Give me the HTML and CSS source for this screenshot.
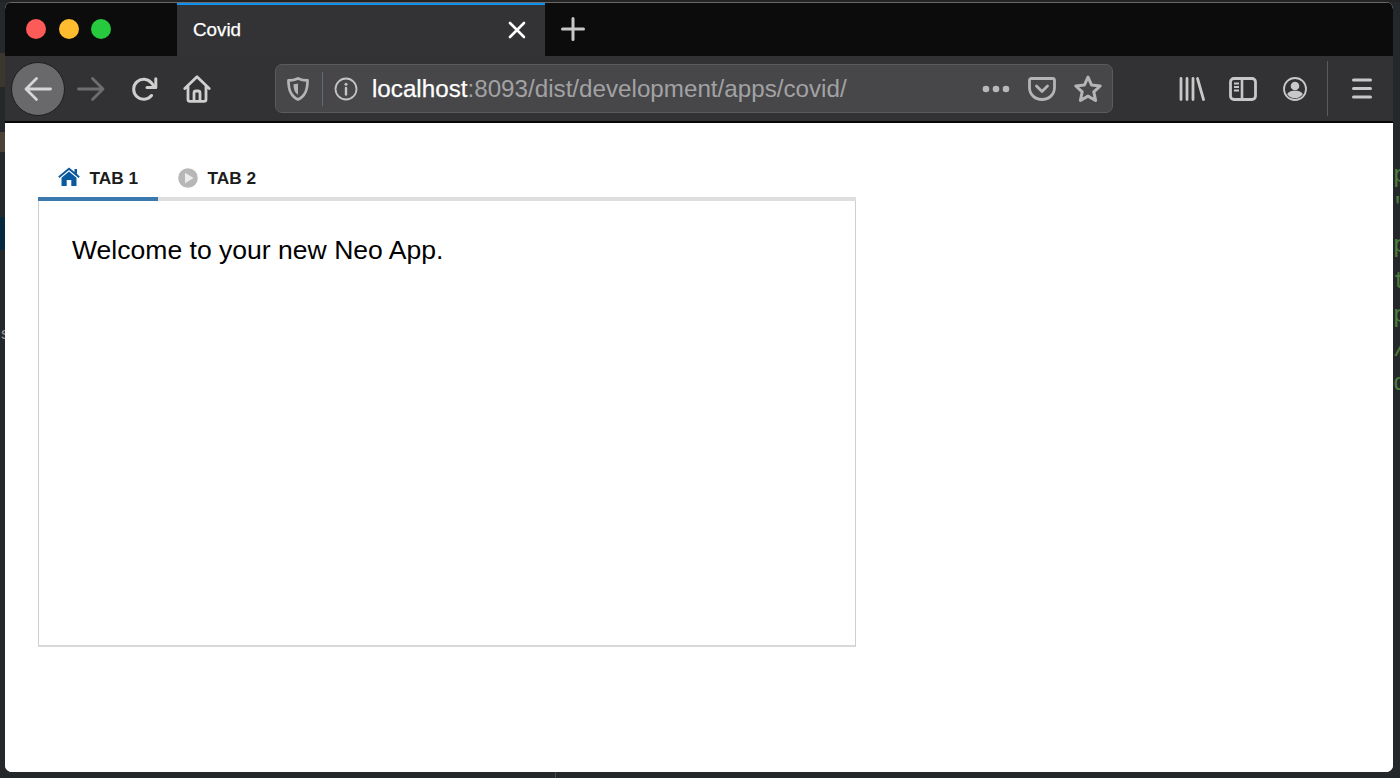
FILE: index.html
```html
<!DOCTYPE html>
<html lang="en">
<head>
<meta charset="utf-8">
<title>Covid</title>
<link rel="stylesheet" href="styles.css">
</head>
<body>
<div class="desk" aria-hidden="true">
  <span class="band band-brown0"></span>
  <span class="band band-brown"></span>
  <span class="band band-blue"></span>
  <span class="band band-top"></span>
  <span class="band band-seam"></span>
  <span class="stray stray-s">s</span>
  <span class="code c1">p</span>
  <span class="code c2">"</span>
  <span class="code c3">p</span>
  <span class="code c4">t</span>
  <span class="code c5">p</span>
  <span class="code c6">/</span>
  <span class="code c7">d</span>
</div>
<main class="window">
  <div class="tabbar">
    <div class="lights">
      <span class="light red"></span>
      <span class="light yellow"></span>
      <span class="light green"></span>
    </div>
    <div class="tab">
      <span class="tab-title">Covid</span>
      <svg class="close" width="18" height="18" viewBox="0 0 18 18"><path d="M2 2L16 16M16 2L2 16" stroke="#fff" stroke-width="2.600" stroke-linecap="round"/></svg>
    </div>
    <svg class="plus" width="24" height="24" viewBox="0 0 24 24"><path d="M12 1.500V22.500M1.500 12H22.500" stroke="#c8c8c8" stroke-width="3" stroke-linecap="round"/></svg>
  </div>
  <div class="toolbar">
    <div class="back">
      <svg width="28" height="26" viewBox="0 0 28 26"><path d="M26.500 13H2.500M12.500 2.500L2 13L12.500 23.500" fill="none" stroke="#d6d6d6" stroke-width="2.800" stroke-linecap="round" stroke-linejoin="round"/></svg>
    </div>
    <svg class="fwd" width="28" height="26" viewBox="0 0 28 26"><path d="M1.500 13H25.500M15.500 2.500L26 13L15.500 23.500" fill="none" stroke="#6e6e70" stroke-width="2.800" stroke-linecap="round" stroke-linejoin="round"/></svg>
    <svg class="reload" width="26" height="24" viewBox="0 0 26 24"><path d="M19.500 18.500A10 10 0 1 1 19.500 6L22 9" fill="none" stroke="#cfcfcf" stroke-width="3" stroke-linecap="round"/><path d="M23.800 1.800V10.500H15" fill="none" stroke="#cfcfcf" stroke-width="3" stroke-linecap="round" stroke-linejoin="round"/></svg>
    <svg class="home" width="28" height="28" viewBox="0 0 28 28"><path d="M1.800 13.500L14 1.800L26.200 13.500M5 11V24.500Q5 26.300 7 26.300H21Q23 26.300 23 24.500V11" fill="none" stroke="#cfcfcf" stroke-width="2.800" stroke-linecap="round" stroke-linejoin="round"/><path d="M11 26V18Q11 16 13 16H15Q17 16 17 18V26" fill="none" stroke="#cfcfcf" stroke-width="2.800"/></svg>
    <div class="urlbar">
      <svg class="shield" width="22" height="24" viewBox="0 0 22 24"><path d="M11 1.500C14 3 17 3.500 20.500 3.500C20.500 12 19 19 11 22.500C3 19 1.500 12 1.500 3.500C5 3.500 8 3 11 1.500Z" fill="none" stroke="#b4b4b4" stroke-width="2.800" stroke-linejoin="round"/><path d="M11 6.500C9.500 7 8 7.300 6.500 7.300C6.500 12 7.500 15.500 11 17.800Z" fill="#b4b4b4"/></svg>
      <span class="url-div"></span>
      <svg class="info" width="24" height="24" viewBox="0 0 24 24"><circle cx="12" cy="12" r="10.500" fill="none" stroke="#c4c4c4" stroke-width="1.800"/><circle cx="12" cy="7.200" r="1.500" fill="#c4c4c4"/><path d="M12 11V17.500" stroke="#c4c4c4" stroke-width="2.400" stroke-linecap="round"/></svg>
      <span class="url"><span class="host">localhost</span><span class="path">:8093/dist/development/apps/covid/</span></span>
      <svg class="dots" width="28" height="8" viewBox="0 0 28 8"><circle cx="4" cy="4" r="3.300" fill="#b8b8b8"/><circle cx="14" cy="4" r="3.300" fill="#b8b8b8"/><circle cx="24" cy="4" r="3.300" fill="#b8b8b8"/></svg>
      <svg class="pocket" width="28" height="24" viewBox="0 0 28 24"><path d="M3.500 1.500H24.500Q26.500 1.500 26.500 3.500V10.500C26.500 17.500 21 22.500 14 22.500C7 22.500 1.500 17.500 1.500 10.500V3.500Q1.500 1.500 3.500 1.500Z" fill="none" stroke="#b4b4b4" stroke-width="2.800"/><path d="M8.500 9L14 14.500L19.500 9" fill="none" stroke="#b4b4b4" stroke-width="2.800" stroke-linecap="round" stroke-linejoin="round"/></svg>
      <svg class="star" width="28" height="28" viewBox="0 0 28 28"><path d="M14 2L17.600 10.100L26.200 11L19.800 16.900L21.600 25.500L14 21.100L6.400 25.500L8.200 16.900L1.800 11L10.400 10.100Z" fill="none" stroke="#b4b4b4" stroke-width="3" stroke-linejoin="round"/></svg>
    </div>
    <svg class="library" width="26" height="24" viewBox="0 0 26 24"><path d="M2 1.500V22.500M8 1.500V22.500M14 1.500V22.500M18.500 1.500L24.500 22.500" fill="none" stroke="#c8c8c8" stroke-width="2.800" stroke-linecap="round"/></svg>
    <svg class="sidebar" width="28" height="24" viewBox="0 0 28 24"><rect x="1.500" y="1.500" width="25" height="21" rx="3.500" fill="none" stroke="#c8c8c8" stroke-width="2.800"/><path d="M13 2V22" stroke="#c8c8c8" stroke-width="2.600"/><path d="M5 6.500H10M5 10H10M5 13.500H10" stroke="#c8c8c8" stroke-width="1.800"/></svg>
    <svg class="account" width="24" height="24" viewBox="0 0 24 24"><circle cx="12" cy="12" r="11" fill="none" stroke="#c8c8c8" stroke-width="1.800"/><circle cx="12" cy="9" r="4.300" fill="#c8c8c8"/><path d="M4.200 17C6 14.300 9 13.800 12 13.800C15 13.800 18 14.300 19.800 17C18 20 15 21.300 12 21.300C9 21.300 6 20 4.200 17Z" fill="#c8c8c8"/></svg>
    <span class="tool-sep"></span>
    <svg class="menu" width="20" height="21" viewBox="0 0 20 21"><path d="M1.500 2H18.500M1.500 10.500H18.500M1.500 19H18.500" stroke="#c8c8c8" stroke-width="3" stroke-linecap="round"/></svg>
  </div>
  <section class="page">
    <div class="tabs">
      <div class="tabs-head">
        <div class="ntab active">
          <svg class="home-ico" width="22" height="19" viewBox="0 0 22 19"><path d="M11 0.500L16.500 5V2H19V7.100L21.800 9.500L20.600 10.900L11 3L1.400 10.900L0.200 9.500Z" fill="#0a5aa0"/><path d="M11 4.600L18.500 10.700V19H13.300V13H8.700V19H3.500V10.700Z" fill="#0a5aa0"/></svg>
          <span class="ntab-label">TAB 1</span>
        </div>
        <div class="ntab">
          <svg width="20" height="20" viewBox="0 0 20 20"><circle cx="10" cy="10" r="9.800" fill="#b7b7b7"/><path d="M7 4.800L15.500 10L7 15.200Z" fill="#ececec"/></svg>
          <span class="ntab-label">TAB 2</span>
        </div>
      </div>
      <div class="tabs-strip"><span class="strip-active"></span></div>
      <div class="panel">Welcome to your new Neo App.</div>
    </div>
  </section>
</main>
</body>
</html>
```

FILE: styles.css
```css
* { box-sizing: border-box; }
html, body { margin: 0; height: 100%; overflow: hidden; }
body {
  position: relative;
  width: 1400px;
  height: 778px;
  background: #25282a;
  font-family: "Liberation Sans", Arial, sans-serif;
  padding: 2px 7px 6px 5px;
}
svg { display: block; flex: none; }

/* Desktop behind the window */
.desk { position: absolute; inset: 0; overflow: hidden; }
.band { position: absolute; display: block; }
.band-brown0 { left: 0; top: 53px; width: 5px; height: 34px; background: #3a382e; }
.band-brown { left: 0; top: 132px; width: 5px; height: 20px; background: #4b4436; }
.band-blue { left: 0; top: 217px; width: 5px; height: 33px; background: #06293f; }
.band-top { left: 0; top: 0; width: 1400px; height: 2px; background: #232323; }
.band-seam { left: 555px; top: 771px; width: 1px; height: 7px; background: #4a4a4a; }
.stray { position: absolute; left: 1px; top: 324px; font-size: 17px; color: #9a9a9a; }
.code {
  position: absolute;
  left: 1393px;
  font-size: 24px;
  line-height: 24px;
  color: #4c7c3c;
  font-family: "Liberation Mono", monospace;
}
.c1 { top: 164px; } .c2 { top: 196px; } .c3 { top: 234px; } .c4 { top: 270px; }
.c5 { top: 304px; } .c6 { top: 338px; } .c7 { top: 372px; }

/* Window */
.window {
  position: relative;
  display: flex;
  flex-direction: column;
  height: 770px;
  border-radius: 7px;
  overflow: hidden;
  background: #fff;
}
.tabbar {
  display: flex;
  align-items: stretch;
  height: 54px;
  background: #0c0c0c;
  border-top: 1px solid #6a6a6a;
}
.lights {
  display: flex;
  align-items: center;
  gap: 12.5px;
  width: 172px;
  padding: 0 0 2px 21px;
}
.light { width: 20px; height: 20px; border-radius: 50%; }
.red { background: #fc5b57; }
.yellow { background: #febc2e; }
.green { background: #27c93f; }
.tab {
  display: flex;
  align-items: center;
  justify-content: space-between;
  width: 368px;
  padding: 0 19px 0 16px;
  background: #333336;
  border-top: 2px solid #0f92f0;
}
.tab-title { color: #fff; font-size: 18.8px; padding-bottom: 2px; -webkit-text-stroke: 0.25px #fff; }
.close { margin-top: -2px; }
.plus { align-self: center; margin: -2px 0 0 16px; }

.toolbar {
  display: flex;
  align-items: center;
  height: 67px;
  padding-left: 6px;
  background: #323234;
  border-bottom: 2px solid #070707;
}
.back {
  display: flex;
  align-items: center;
  justify-content: center;
  width: 54px;
  height: 54px;
  border-radius: 50%;
  background: #69696b;
  border: 1px solid #1e1e1f;
}
.fwd { margin-left: 12px; }
.reload { margin-left: 27px; }
.home { margin-left: 25px; }
.urlbar {
  display: flex;
  align-items: center;
  width: 838px;
  height: 49px;
  margin-left: 64px;
  padding-left: 11px;
  background: #474749;
  border: 1px solid #5b5b5d;
  border-radius: 7px;
}
.url-div { width: 1px; height: 34px; margin-left: 13px; background: #5f6a76; }
.info { margin-left: 11px; }
.url { margin-left: 14px; font-size: 24.2px; white-space: nowrap; width: 610px; }
.host { color: #fff; -webkit-text-stroke: 0.25px #fff; }
.path { color: #a2a2a4; }
.pocket { margin-left: 18px; }
.star { margin-left: 18px; }
.library { margin-left: 66px; }
.sidebar { margin-left: 24px; }
.account { margin-left: 26px; }
.tool-sep { width: 1px; height: 55px; margin-left: 20px; background: #5a5a5c; }
.menu { margin-left: 24px; }

/* Page */
.page { flex: 1; padding: 35px 33px 0; background: #fff; }
.tabs { width: 818px; }
.tabs-head { display: flex; height: 39px; }
.ntab {
  display: flex;
  align-items: center;
  gap: 9.5px;
  width: 120px;
  padding: 0 0 0 20px;
  font-size: 17.3px;
  font-weight: 700;
  color: #1c1c1c;
}
.ntab-label { padding-top: 2px; }
.home-ico { margin-top: -2px; }
.tabs-strip { height: 4px; background: #dedede; }
.strip-active { display: block; width: 120px; height: 4px; background: #3b78ad; }
.panel {
  height: 446px;
  padding: 34px 33px 0;
  border: 1px solid #cfcfcf;
  border-top: 0;
  border-bottom: 2px solid #d8d8d8;
  font-size: 26.55px;
  line-height: 30px;
  color: #000;
}
```
